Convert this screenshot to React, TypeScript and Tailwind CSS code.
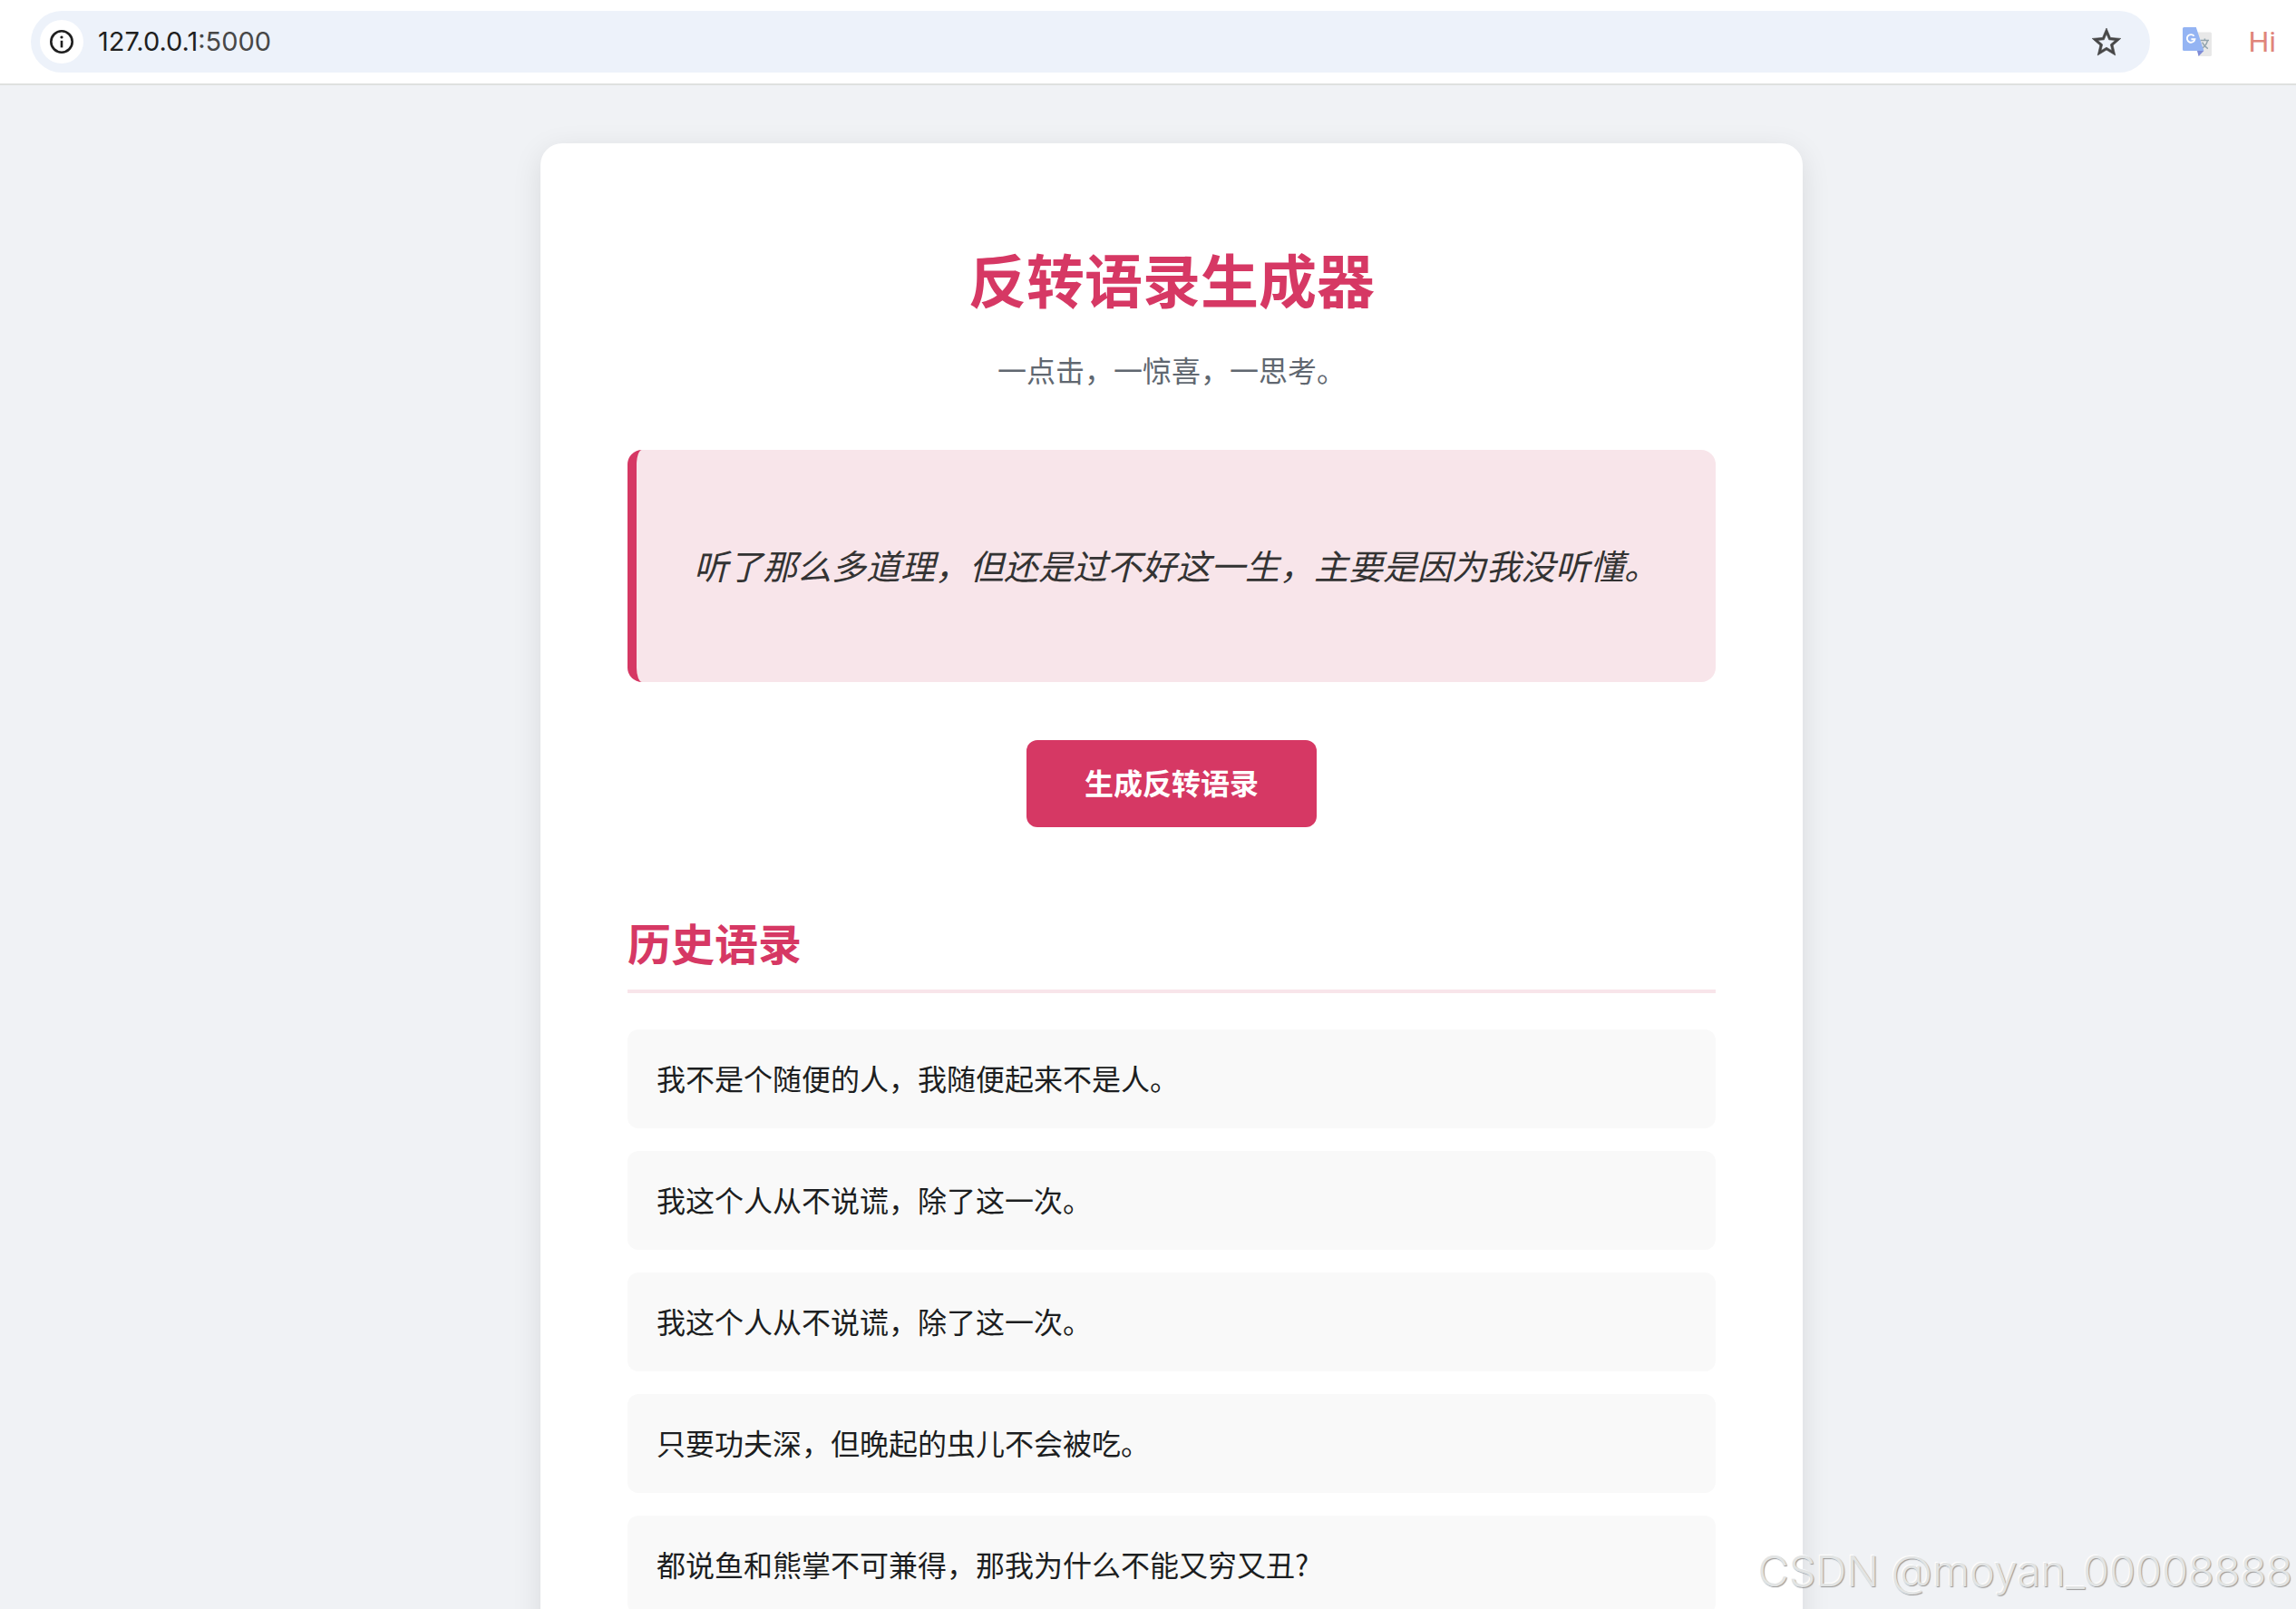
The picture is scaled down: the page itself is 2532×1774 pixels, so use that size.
import { useState } from "react";

const quotes = [
    "我不是个随便的人，我随便起来不是人。",
    "我这个人从不说谎，除了这一次。",
    "我这个人从不说谎，除了这一次。",
    "只要功夫深，但晚起的虫儿不会被吃。",
    "都说鱼和熊掌不可兼得，那我为什么不能又穷又丑?",
];

function InfoIcon() {
    return (
        <svg viewBox="0 0 26 26" className="size-[26px]" fill="none" aria-hidden="true">
            <circle cx="13" cy="13" r="11.7" stroke="#1f1f1f" strokeWidth="2.6" />
            <rect x="11.7" y="11.8" width="2.6" height="7.6" fill="#1f1f1f" />
            <circle cx="13" cy="8" r="1.6" fill="#1f1f1f" />
        </svg>
    );
}

function StarIcon() {
    return (
        <svg viewBox="2 2 20 19" className="h-[30px] w-8 overflow-visible" fill="#474747" stroke="#474747" strokeWidth="0.4" aria-hidden="true">
            <path d="M22 9.24l-7.19-.62L12 2 9.19 8.63 2 9.24l5.46 4.73L5.82 21 12 17.27 18.18 21l-1.63-7.03L22 9.24zM12 15.4l-3.76 2.27 1-4.28-3.32-2.88 4.38-.38L12 6.1l1.71 4.04 4.38.38-3.32 2.88 1 4.28L12 15.4z" />
        </svg>
    );
}

function TranslateIcon() {
    return (
        <svg viewBox="0 0 32 32" className="size-8" fill="none" aria-hidden="true">
            <path d="M13 5.5h17.5A1.5 1.5 0 0 1 32 7v23.5a1.5 1.5 0 0 1-1.5 1.5H17.5z" fill="#e8e8e8" />
            <path d="M19.5 14.6h9.5M24.4 12.4v2.2M27.4 14.8c-.8 3.6-3.4 6.8-6.4 8.8M21.6 16.6c1.2 2.8 3.4 5 6.2 7" stroke="#93a5ae" strokeWidth="1.5" />
            <path d="M16 26h7.4L17.6 32z" fill="#7f8bd6" />
            <path d="M1.5 0h13.3l8.6 26H1.5A1.5 1.5 0 0 1 0 24.5v-23A1.5 1.5 0 0 1 1.5 0z" fill="#94b4f3" />
            <path d="M12.6 9.8A4.3 4.3 0 1 0 13.4 13.2H9.4" stroke="#fff" strokeWidth="1.9" />
        </svg>
    );
}

export default function App() {
    const [history, setHistory] = useState(quotes);
    const [current, setCurrent] = useState("听了那么多道理，但还是过不好这一生，主要是因为我没听懂。");

    const generate = () => {
        const next = quotes[Math.floor(Math.random() * quotes.length)];
        setHistory([current, ...history]);
        setCurrent(next);
    };

    return (
        <div lang="zh-CN" className="relative flex h-screen flex-col overflow-hidden bg-[#f0f2f5] font-['Noto_Sans_CJK_SC',sans-serif]">
            <header className="flex items-center border-b-2 border-[#dfe1df] bg-white py-3 pr-[22px] pl-[34px] font-[Inter,'Noto_Sans_CJK_SC',sans-serif]">
                <div className="flex h-[68px] flex-1 items-center rounded-full bg-[#edf2fa] pr-8 pl-2.5">
                    <button aria-label="网站信息" className="flex size-12 items-center justify-center rounded-full bg-white">
                        <InfoIcon />
                    </button>
                    <a href="http://127.0.0.1:5000" className="ml-4 text-[29px] leading-9 text-[#1f1f1f]">
                        127.0.0.1<span className="text-[#474747]">:5000</span>
                    </a>
                    <button aria-label="收藏" className="ml-auto">
                        <StarIcon />
                    </button>
                </div>
                <button aria-label="翻译" className="ml-9">
                    <TranslateIcon />
                </button>
                <button className="ml-10 font-[Roboto,sans-serif] text-[32px] leading-9 text-[#e0857b]">Hi</button>
            </header>

            <main className="flex-1 overflow-y-auto pt-16 pb-16 pl-[52px] [scrollbar-width:none]">
                <div className="mx-auto max-w-[1392px] rounded-3xl bg-white p-24 shadow-[0_8px_32px_rgba(0,0,0,0.1)]">
                    <h1 className="pt-1 text-center text-[64px] leading-[96px] font-bold text-[#d63864]">反转语录生成器</h1>
                    <p className="pt-7 text-center text-[32px] leading-[51px] text-[#606770]">一点击，一惊喜，一思考。</p>

                    <div className="mt-[63px] flex min-h-64 items-center justify-center rounded-2xl border-l-[10px] border-[#d63864] bg-[#f8e5ea] px-12 pb-1">
                        <p className="text-[38px] leading-[61px] text-[#333333] italic">{current}</p>
                    </div>

                    <div className="mt-16 flex justify-center">
                        <button onClick={generate} className="h-24 rounded-xl bg-[#d63864] px-16 pb-1 text-[32px] font-bold text-white">
                            生成反转语录
                        </button>
                    </div>

                    <section className="mt-[88px]">
                        <h2 className="border-b-4 border-[#f8e5ea] pb-3.5 text-[48px] leading-[77px] font-bold text-[#d63864]">历史语录</h2>
                        <ul className="mt-10 flex flex-col gap-[25px]">
                            {history.map((quote, i) => (
                                <li key={i} className="rounded-xl bg-[#f9f9f9] px-8 pt-7 pb-[30px] text-[32px] leading-[51px] text-[#1c1e21]">
                                    {quote}
                                </li>
                            ))}
                        </ul>
                    </section>
                </div>
            </main>

            <p className="pointer-events-none absolute right-1 bottom-2.5 font-[Inter,sans-serif] text-[47px] leading-[64px] font-light text-[#e2e4e4] [text-shadow:1px_1px_1px_#999999,-1px_-1px_1px_#ffffff]">
                CSDN @moyan_00008888
            </p>
        </div>
    );
}
